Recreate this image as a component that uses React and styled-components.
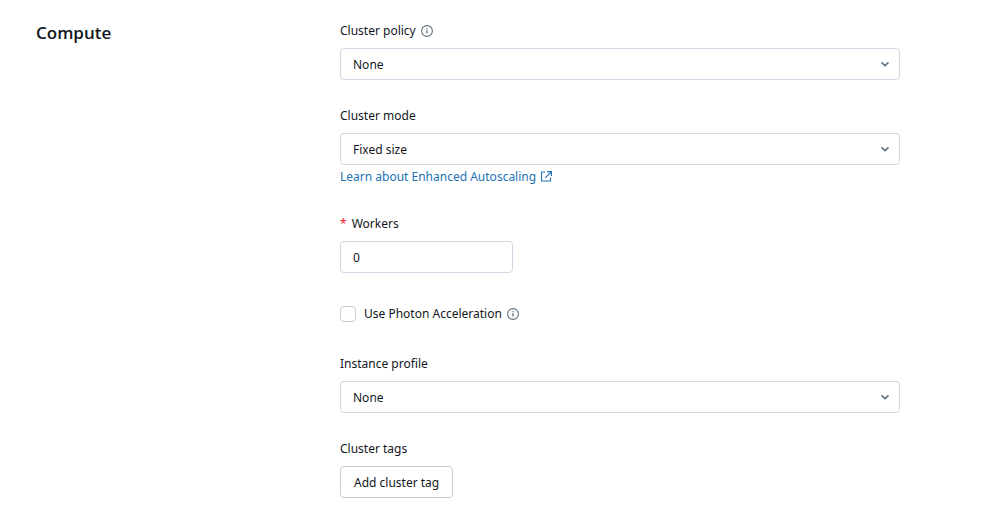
import React from 'react';
import styled, { createGlobalStyle } from 'styled-components';

const GlobalStyle = createGlobalStyle`
	*, *::before, *::after {
		box-sizing: border-box;
	}

	body {
		margin: 0;
		background: #ffffff;
		color: #11171c;
		font-family: 'Noto Sans', 'Open Sans', sans-serif;
		font-size: 12px;
		line-height: 22px;
	}

	input, select, button {
		font: inherit;
		color: inherit;
	}
`;

const Section = styled.section`
	display: grid;
	grid-template-columns: 304px minmax(0, 560px);
	padding: 20px 36px 16px;
`;

const SectionTitle = styled.h2`
	margin: 0;
	font-family: 'Open Sans', sans-serif;
	font-size: 17px;
	font-weight: 600;
	line-height: 25px;
`;

const Form = styled.form`
	display: flex;
	flex-direction: column;
	gap: 25px;
`;

const Field = styled.div`
	display: flex;
	flex-direction: column;
	align-items: flex-start;
`;

const FieldLabel = styled.label`
	display: flex;
	align-items: center;
	gap: 5px;
	margin-bottom: 6px;
`;

const Required = styled.span`
	color: #f5222d;
`;

const SelectWrap = styled.div`
	display: grid;
	align-items: center;
	width: 100%;

	> * {
		grid-area: 1 / 1;
	}

	> svg {
		justify-self: end;
		margin-right: 10px;
		pointer-events: none;
	}
`;

const Select = styled.select`
	width: 100%;
	height: 32px;
	padding: 2px 32px 0 12px;
	border: 1px solid #cdd9e4;
	border-radius: 4px;
	background: #ffffff;
	appearance: none;
	cursor: pointer;
`;

const Input = styled.input`
	width: 173px;
	height: 32px;
	padding: 0 12px;
	border: 1px solid #cdd9e4;
	border-radius: 4px;
	background: #ffffff;
`;

const HelpLink = styled.a`
	display: flex;
	align-items: center;
	gap: 4px;
	color: #2272b4;
	line-height: 23px;
	text-decoration: none;

	&:hover {
		text-decoration: underline;
	}
`;

const CheckboxRow = styled.div`
	display: flex;
	align-items: center;
	gap: 5px;
	min-height: 30px;
	padding-top: 2px;
`;

const CheckboxLabel = styled.label`
	display: flex;
	align-items: center;
	gap: 8px;
	cursor: pointer;
`;

const Checkbox = styled.input`
	width: 16px;
	height: 16px;
	margin: 0;
	border: 1px solid #c0cdd8;
	border-radius: 4px;
	background: #ffffff;
	appearance: none;
	cursor: pointer;

	&:checked {
		border-color: #2272b4;
		background: #2272b4;
	}
`;

const Button = styled.button`
	height: 32px;
	padding: 2px 13px 0;
	border: 1px solid #c0cdd8;
	border-radius: 4px;
	background: #ffffff;
	cursor: pointer;
`;

const InfoIcon = () => (
	<svg width="12" height="12" viewBox="0 0 12 12" fill="none" aria-hidden="true">
		<circle cx="6" cy="6" r="5.4" stroke="#5f7281" strokeWidth="1.1" />
		<path d="M6 5.3V8.6" stroke="#5f7281" strokeWidth="1.3" />
		<circle cx="6" cy="3.8" r="0.7" fill="#5f7281" />
	</svg>
);

const ChevronIcon = () => (
	<svg width="10" height="10" viewBox="0 0 10 10" fill="none" aria-hidden="true">
		<path d="M1.5 3.4L5 6.7L8.5 3.4" stroke="#5f7281" strokeWidth="1.6" />
	</svg>
);

const NewWindowIcon = () => (
	<svg width="12" height="12" viewBox="0 0 12 12" fill="none" aria-hidden="true">
		<path d="M5 1H1.5V10H10.5V6.5" stroke="#2272b4" strokeWidth="1.1" />
		<path d="M7 0.6H11.4V5M11.2 0.8L5.2 6.8" stroke="#2272b4" strokeWidth="1.2" />
	</svg>
);

const SelectField = ({ id, label, info, options, children }) => (
	<Field>
		<FieldLabel htmlFor={id}>
			{label}
			{info && <InfoIcon />}
		</FieldLabel>
		<SelectWrap>
			<Select id={id} defaultValue={options[0]}>
				{options.map(option => <option key={option}>{option}</option>)}
			</Select>
			<ChevronIcon />
		</SelectWrap>
		{children}
	</Field>
);

export default function App() {
	return (
		<>
			<GlobalStyle />
			<Section>
				<SectionTitle>Compute</SectionTitle>
				<Form onSubmit={event => event.preventDefault()}>
					<SelectField id="policy" label="Cluster policy" info options={['None']} />
					<SelectField id="mode" label="Cluster mode" options={['Fixed size']}>
						<HelpLink href="#autoscaling">
							Learn about Enhanced Autoscaling
							<NewWindowIcon />
						</HelpLink>
					</SelectField>
					<Field>
						<FieldLabel htmlFor="workers">
							<Required>*</Required>
							Workers
						</FieldLabel>
						<Input id="workers" inputMode="numeric" defaultValue="0" required />
					</Field>
					<CheckboxRow>
						<CheckboxLabel>
							<Checkbox type="checkbox" />
							Use Photon Acceleration
						</CheckboxLabel>
						<InfoIcon />
					</CheckboxRow>
					<SelectField id="profile" label="Instance profile" options={['None']} />
					<Field>
						<FieldLabel as="div">Cluster tags</FieldLabel>
						<Button type="button">Add cluster tag</Button>
					</Field>
				</Form>
			</Section>
		</>
	);
}
